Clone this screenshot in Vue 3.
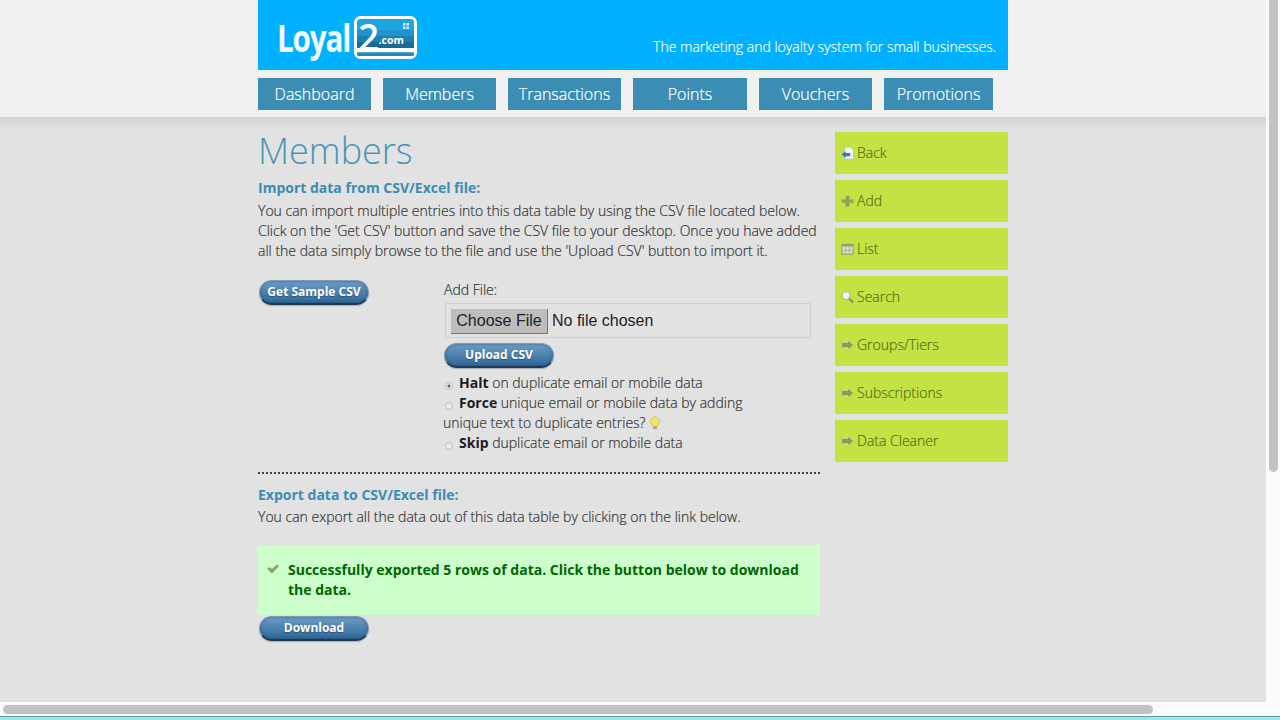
<template>
  <div class="screen">
    <div class="upper">
      <div class="page">
        <div class="top">
          <div class="wrap">
            <header class="banner">
              <div class="logo">
                <span class="logo-word">Loyal</span>
                <svg class="logo-card" width="63" height="43" viewBox="0 0 63 43">
                  <rect x="1.500" y="1.500" width="60" height="40" rx="5" fill="#1fa4e2" stroke="#fff" stroke-width="3" />
                  <rect x="3" y="14" width="57" height="6" fill="#1f93cb" />
                  <rect x="3" y="20" width="57" height="6" fill="#1d7fb0" />
                  <rect x="3" y="26" width="57" height="6" fill="#1a6a97" />
                  <rect x="3" y="32" width="57" height="4.500" fill="#fff" />
                  <path d="M3 36.500h57v2q0 1.500-2 1.500H5q-2 0-2-1.500z" fill="#2a86b4" />
                  <g fill="#d5eef9">
                    <rect x="49" y="7" width="2.500" height="2.500" /><rect x="52.500" y="7" width="2.500" height="2.500" />
                    <rect x="49" y="10.500" width="2.500" height="2.500" /><rect x="52.500" y="10.500" width="2.500" height="2.500" />
                  </g>
                  <text x="4" y="35" class="card-two">2</text>
                  <text x="24.500" y="28" class="card-com">.com</text>
                </svg>
              </div>
              <p class="tagline thin">The marketing and loyalty system for small businesses.</p>
            </header>
            <nav class="nav">
              <a v-for="item in navItems" :key="item" class="nav-item thin">{{ item }}</a>
            </nav>
          </div>
        </div>

        <div class="body">
          <div class="wrap columns">
            <main class="main">
              <h1 class="title">Members</h1>
              <h2 class="subhead">Import data from CSV/Excel file:</h2>
              <p class="text thin">You can import multiple entries into this data table by using the CSV file located below. Click on the 'Get CSV' button and save the CSV file to your desktop. Once you have added all the data simply browse to the file and use the 'Upload CSV' button to import it.</p>

              <div class="import">
                <div class="import-left">
                  <a class="pill">Get Sample CSV</a>
                </div>
                <div class="import-right">
                  <div class="file-label thin">Add File:</div>
                  <div class="file-box">
                    <span class="file-btn">Choose File</span>
                    <span class="file-name">No file chosen</span>
                  </div>
                  <a class="pill upload">Upload CSV</a>
                  <div class="options thin">
                    <div><span class="radio on"></span><b>Halt</b> on duplicate email or mobile data</div>
                    <div>
                      <span class="radio"></span><b>Force</b> unique email or mobile data by adding<br />
                      <span class="wrapped">unique text to duplicate entries?</span>
                      <svg class="bulb" width="12" height="14" viewBox="0 0 12 14">
                        <path d="M6 1a4.600 4.600 0 0 0-4.600 4.600c0 1.900 1.400 2.800 2.200 4.600h4.800c.8-1.800 2.200-2.700 2.200-4.600A4.600 4.600 0 0 0 6 1z" fill="#f4e26c" stroke="#c9b54a" stroke-width=".7" />
                        <rect x="4" y="10.600" width="4" height="2.400" rx=".8" fill="#a9a488" />
                      </svg>
                    </div>
                    <div><span class="radio"></span><b>Skip</b> duplicate email or mobile data</div>
                  </div>
                </div>
              </div>

              <div class="rule"></div>

              <h2 class="subhead export-head">Export data to CSV/Excel file:</h2>
              <p class="text thin">You can export all the data out of this data table by clicking on the link below.</p>

              <div class="notice">
                <svg class="check" width="12" height="10" viewBox="0 0 12 10">
                  <path d="M.5 5l2-1.600L5 5.200 10 .8l1.500 1.200L5 9.300z" fill="#93a35c" stroke="#6f7f45" stroke-width=".4" />
                </svg>
                <span>Successfully exported 5 rows of data. Click the button below to download the data.</span>
              </div>
              <a class="pill download">Download</a>
            </main>

            <aside class="side">
              <a v-for="link in sideLinks" :key="link.label" class="side-item thin">
                <svg class="side-icon" width="13" height="14" viewBox="0 0 14 14">
                  <template v-if="link.icon === 'back'">
                    <path d="M4 .5h6l3.500 3.500v9.500H4z" fill="#f4f8fa" stroke="#a9b8c2" stroke-width=".7" />
                    <path d="M.5 8.500l4.500-3.500v2h5v3.500H5v2z" fill="#3f78b5" />
                  </template>
                  <path v-else-if="link.icon === 'add'" d="M5 1.500h4v4h4.500v3.500H9v4H5V9H.5V5.500H5z" fill="#8ea35a" stroke="#aab87c" stroke-width=".6" />
                  <template v-else-if="link.icon === 'list'">
                    <rect x="1" y="2" width="12" height="10.500" fill="#dfe3c8" stroke="#838f6c" />
                    <path d="M1.500 2.500h11v2h-11z" fill="#98a67f" />
                    <path d="M5 5v7M9 5v7M2 8.500h10" stroke="#a0ab8a" stroke-width=".9" />
                  </template>
                  <template v-else-if="link.icon === 'search'">
                    <circle cx="5.500" cy="5.500" r="4.200" fill="#f2f5ea" stroke="#b5baa5" stroke-width="1.300" />
                    <path d="M8.700 8.700l4.300 4.300" stroke="#8c8f6e" stroke-width="2.200" />
                  </template>
                  <path v-else d="M.5 4.300h7V1.800L13.500 7l-6 5.200V9.700h-7z" fill="#8b9c5e" stroke="#dfe4b8" stroke-width=".5" />
                </svg>
                <span>{{ link.label }}</span>
              </a>
            </aside>
          </div>
        </div>
      </div>
      <div class="v-track"><div class="v-thumb"></div></div>
    </div>
    <div class="h-track"><div class="h-thumb"></div></div>
    <div class="strip"></div>
  </div>
</template>

<script setup>
const navItems = ['Dashboard', 'Members', 'Transactions', 'Points', 'Vouchers', 'Promotions']

const sideLinks = [
  { label: 'Back', icon: 'back' },
  { label: 'Add', icon: 'add' },
  { label: 'List', icon: 'list' },
  { label: 'Search', icon: 'search' },
  { label: 'Groups/Tiers', icon: 'arrow' },
  { label: 'Subscriptions', icon: 'arrow' },
  { label: 'Data Cleaner', icon: 'arrow' }
]
</script>

<style>
html, body {
  margin: 0;
  overflow: hidden;
}
</style>

<style scoped>
.screen {
  width: 1280px;
  height: 720px;
  display: flex;
  flex-direction: column;
  overflow: hidden;
  background: #fbfbfb;
  font-family: "Open Sans", "Noto Sans", sans-serif;
  font-weight: 300;
  color: #363636;
}
/* the reference's light text renders a touch heavier */
.thin {
  -webkit-text-stroke: 0.2px;
}
.thin b {
  -webkit-text-stroke: 0;
}
.upper {
  display: flex;
  height: 702px;
}
.page {
  width: 1266px;
  display: flex;
  flex-direction: column;
}
.wrap {
  width: 750px;
  margin-left: 258px;
}
.top {
  height: 117px;
  background: #f1f1f1;
}
.banner {
  height: 70px;
  background: #00b1ff;
  display: flex;
  justify-content: space-between;
  padding: 0 12px 0 19px;
  box-sizing: border-box;
}
.logo {
  display: flex;
  align-items: flex-start;
  padding-top: 15px;
}
.logo-word {
  width: 77px;
  font-size: 37px;
  font-weight: 700;
  line-height: 46px;
  letter-spacing: -1.400px;
  color: #f4fbff;
  transform: scaleX(0.8);
  transform-origin: left center;
}
.logo-card {
  margin-top: 1px;
  overflow: visible;
}
.card-two {
  font-family: "Open Sans", sans-serif;
  font-size: 37px;
  font-weight: 600;
  fill: #fff;
}
.card-com {
  font-family: "Open Sans", sans-serif;
  font-size: 10.500px;
  font-weight: 700;
  fill: #fff;
}
.tagline {
  margin: 37px 0 0;
  font-size: 14px;
  line-height: 19px;
  color: #fff;
}
.nav {
  display: flex;
  gap: 12px;
  margin-top: 8px;
}
.nav-item {
  width: 113px;
  height: 32px;
  line-height: 32px;
  text-align: center;
  font-size: 16px;
  color: #fff;
  background: #3b8db4;
}
.nav-item:nth-child(4) {
  width: 114px;
}
.nav-item:last-child {
  width: 109px;
}
.body {
  flex: 1;
  background: linear-gradient(#d2d2d2, #e2e2e2 12px);
}
.columns {
  display: flex;
  justify-content: space-between;
}
.main {
  width: 562px;
}
.title {
  margin: 11px 0 0;
  font-size: 36px;
  line-height: 46px;
  font-weight: 300;
  color: #4a94b9;
}
.subhead {
  margin: 4px 0 0;
  font-size: 14px;
  line-height: 20px;
  font-weight: 700;
  color: #3b8db4;
}
.text {
  margin: 3px 0 0;
  font-size: 14px;
  line-height: 20px;
}
.import {
  display: grid;
  grid-template-columns: 186px 1fr;
  margin-top: 18px;
}
.import-left {
  padding-left: 1px;
  padding-top: 1px;
}
.pill {
  display: block;
  width: 110px;
  height: 25px;
  box-sizing: border-box;
  border-radius: 13px;
  border: 1px solid #7f9bb3;
  border-bottom: 2px solid #1c3a56;
  background: linear-gradient(#6b9dc6, #2f6798);
  box-shadow: inset 0 0 3px rgba(20, 50, 80, 0.55), 0 1px 1px rgba(0, 0, 0, 0.25);
  color: #fff;
  font-size: 12px;
  font-weight: 700;
  line-height: 21px;
  text-align: center;
  text-shadow: 0 1px 1px rgba(0, 0, 0, 0.3);
}
.file-label {
  padding-top: 1px;
  font-size: 14px;
  line-height: 20px;
}
.file-box {
  display: flex;
  align-items: center;
  gap: 4px;
  width: 366px;
  height: 35px;
  margin-top: 3px;
  padding-left: 4px;
  margin-left: 1px;
  box-sizing: border-box;
  border: 1px solid #cfcfcf;
  border-radius: 2px;
  font-family: "Liberation Sans", Arial, sans-serif;
  font-weight: 400;
  font-size: 16px;
  color: #222;
}
.file-btn {
  width: 98px;
  height: 26px;
  line-height: 26px;
  text-align: center;
  background: #bdbdbd;
  box-shadow: inset 1px 1px 0 #e4e4e4, inset -1px -1px 0 #777;
}
.upload {
  margin-top: 5px;
}
.options {
  margin-top: 5px;
  font-size: 14px;
  line-height: 20px;
}
.options b {
  font-weight: 700;
  color: #1c1c1c;
}
.radio {
  display: inline-block;
  width: 8px;
  height: 8px;
  box-sizing: border-box;
  margin: 0 6px 0 1px;
  border: 1px solid #bdbdbd;
  border-radius: 50%;
  background: #ececec;
  vertical-align: -2px;
}
.radio.on {
  background: radial-gradient(circle, #666 0 1.300px, #ececec 1.800px);
}
.wrapped {
  margin-left: -1px;
}
.bulb {
  margin-left: 3px;
  vertical-align: -2px;
}
.rule {
  height: 0;
  margin-top: 19px;
  border-top: 2px dotted #444;
}
.export-head {
  margin-top: 11px;
}
.export-head + .text {
  margin-top: 2px;
}
.notice {
  display: flex;
  gap: 9px;
  height: 70px;
  margin-top: 18px;
  padding: 15px 12px 0 9px;
  box-sizing: border-box;
  background: #ccffcc;
  color: #006600;
  font-size: 14px;
  font-weight: 700;
  line-height: 20px;
}
.check {
  flex: none;
  margin-top: 4px;
}
.download {
  margin: 1px 0 0 1px;
}
.side {
  width: 173px;
  display: flex;
  flex-direction: column;
  gap: 6px;
  padding-top: 15px;
}
.side-item {
  display: flex;
  align-items: center;
  gap: 3px;
  height: 42px;
  padding: 0 0 2px 6px;
  box-sizing: border-box;
  background: #c3e343;
  color: #56701c;
  font-size: 14px;
}
.side-icon {
  flex: none;
  margin-top: 2px;
}
.v-track {
  flex: 1;
  padding-left: 3px;
}
.v-thumb {
  width: 9px;
  height: 472px;
  border-radius: 0 0 5px 5px;
  background: #c2c2c2;
}
.h-track {
  height: 14px;
  padding: 3px 0 0 3px;
  box-sizing: border-box;
}
.h-thumb {
  width: 1150px;
  height: 9px;
  border-radius: 5px;
  background: #c2c2c2;
}
.strip {
  height: 4px;
  background: #a4e0ee;
  border-top: 1px solid #5a9fb0;
  box-sizing: border-box;
}
</style>
